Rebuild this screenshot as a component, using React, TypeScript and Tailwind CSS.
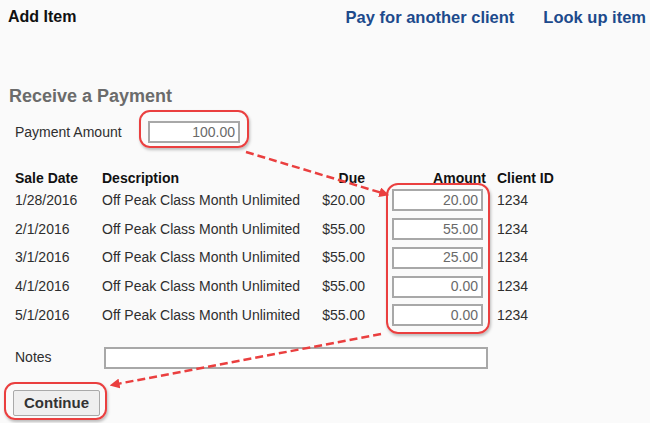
import React from 'react';

type Row = { date: string; desc: string; due: string; amount: string; client: string };

const rows: Row[] = [
  { date: '1/28/2016', desc: 'Off Peak Class Month Unlimited', due: '$20.00', amount: '20.00', client: '1234' },
  { date: '2/1/2016', desc: 'Off Peak Class Month Unlimited', due: '$55.00', amount: '55.00', client: '1234' },
  { date: '3/1/2016', desc: 'Off Peak Class Month Unlimited', due: '$55.00', amount: '25.00', client: '1234' },
  { date: '4/1/2016', desc: 'Off Peak Class Month Unlimited', due: '$55.00', amount: '0.00', client: '1234' },
  { date: '5/1/2016', desc: 'Off Peak Class Month Unlimited', due: '$55.00', amount: '0.00', client: '1234' },
];

const cols = 'grid grid-cols-[87px_208px_55px_121px_1fr] items-center';

function AmountBox({ value, width = 'w-[91px]' }: { value: string; width?: string }) {
  return (
    <div className={`${width} h-[22px] bg-white border-2 border-[#a8a8a8] flex items-center justify-end pr-[3px] text-[14px] text-[#6a6a6a]`}>
      {value}
    </div>
  );
}

// red annotation callouts drawn over the form
function Annotations() {
  return (
    <>
      <div className="absolute left-[139px] top-[110px] w-[110px] h-[38px] rounded-[11px] border-2 border-[#ea3f3f] shadow-[1px_2px_3px_rgba(0,0,0,0.25)] pointer-events-none" />
      <div className="absolute left-[386px] top-[183px] w-[104px] h-[151px] rounded-[12px] border-2 border-[#ea3f3f] shadow-[1px_2px_3px_rgba(0,0,0,0.25)] pointer-events-none" />
      <div className="absolute left-[4px] top-[382px] w-[103px] h-[38px] rounded-[11px] border-2 border-[#ea3f3f] shadow-[1px_2px_3px_rgba(0,0,0,0.25)] pointer-events-none" />
      <svg className="absolute inset-0 pointer-events-none" width="650" height="423" viewBox="0 0 650 423">
        <defs>
          <marker id="head" markerWidth="4" markerHeight="4" refX="1" refY="2" orient="auto" markerUnits="strokeWidth">
            <path d="M0,0 L4,2 L0,4 Z" fill="#ea3f3f" />
          </marker>
        </defs>
        <line x1="246" y1="152" x2="382" y2="193" stroke="#ea3f3f" strokeWidth="2.5" strokeDasharray="8 4" markerEnd="url(#head)" />
        <line x1="381" y1="334" x2="117" y2="384" stroke="#ea3f3f" strokeWidth="2.5" strokeDasharray="8 4" markerEnd="url(#head)" />
      </svg>
    </>
  );
}

export default function App() {
  return (
    <div className="relative w-[650px] h-[423px] overflow-hidden bg-[#fafafa] text-[#2e2e2e] font-['Liberation_Sans',Arial,sans-serif]">
      <div className="flex items-center pt-[7px] pl-[8px] pr-[4px] h-[27px]">
        <div className="text-[16px] font-bold text-[#111]">Add Item</div>
        <div className="ml-auto flex gap-[29px] text-[16.5px] font-bold text-[#1d4a8c]">
          <span>Pay for another client</span>
          <span>Look up item</span>
        </div>
      </div>

      <div className="mt-[58px] pl-[9px] text-[18px] leading-[22px] font-bold text-[#6b6b6b]">Receive a Payment</div>

      <div className="mt-[14px] flex items-center pl-[15px] text-[14px]">
        <span className="w-[133px]">Payment Amount</span>
        <AmountBox value="100.00" width="w-[92px]" />
      </div>

      <div className="mt-[25px] pl-[15px] text-[14px]">
        <div className={`${cols} h-[18px] font-bold text-[#111]`}>
          <span>Sale Date</span>
          <span>Description</span>
          <span className="text-right">Due</span>
          <span className="text-right">Amount</span>
          <span className="pl-[11px]">Client ID</span>
        </div>
        {rows.map((r, i) => (
          <div key={i} className={`${cols} h-[28.75px]`}>
            <span>{r.date}</span>
            <span>{r.desc}</span>
            <span className="text-right">{r.due}</span>
            <div className="flex justify-end pr-[3px]">
              <AmountBox value={r.amount} />
            </div>
            <span className="pl-[11px]">{r.client}</span>
          </div>
        ))}
      </div>

      <div className="mt-[17px] flex items-center pl-[15px] text-[14px]">
        <span className="w-[89px]">Notes</span>
        <div className="w-[384px] h-[22px] bg-white border-2 border-[#a8a8a8]" />
      </div>

      <button className="mt-[21px] ml-[13px] w-[87px] h-[26px] bg-[#efefef] border border-[#a9a9a9] rounded-[2px] text-[15px] font-bold text-[#333]">
        Continue
      </button>

      <Annotations />
    </div>
  );
}
